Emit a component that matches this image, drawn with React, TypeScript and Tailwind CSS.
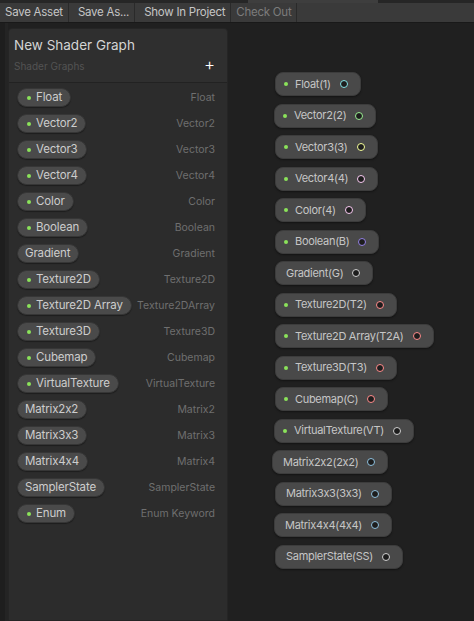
import React from "react"

const font = { fontFamily: "Inter, 'Noto Sans', sans-serif" }

type Prop = { name: string; type: string; dot: boolean }

const props: Prop[] = [
  { name: "Float", type: "Float", dot: true },
  { name: "Vector2", type: "Vector2", dot: true },
  { name: "Vector3", type: "Vector3", dot: true },
  { name: "Vector4", type: "Vector4", dot: true },
  { name: "Color", type: "Color", dot: true },
  { name: "Boolean", type: "Boolean", dot: true },
  { name: "Gradient", type: "Gradient", dot: false },
  { name: "Texture2D", type: "Texture2D", dot: true },
  { name: "Texture2D Array", type: "Texture2DArray", dot: true },
  { name: "Texture3D", type: "Texture3D", dot: true },
  { name: "Cubemap", type: "Cubemap", dot: true },
  { name: "VirtualTexture", type: "VirtualTexture", dot: true },
  { name: "Matrix2x2", type: "Matrix2", dot: false },
  { name: "Matrix3x3", type: "Matrix3", dot: false },
  { name: "Matrix4x4", type: "Matrix4", dot: false },
  { name: "SamplerState", type: "SamplerState", dot: false },
  { name: "Enum", type: "Enum Keyword", dot: true },
]

type Node = { label: string; port: string; dot: boolean; shift?: string }

const nodes: Node[] = [
  { label: "Float(1)", port: "#84e4e7", dot: true },
  { label: "Vector2(2)", port: "#9aef92", dot: true, shift: "-ml-px" },
  { label: "Vector3(3)", port: "#f6ff9a", dot: true },
  { label: "Vector4(4)", port: "#fbcbf4", dot: true },
  { label: "Color(4)", port: "#fbcbf4", dot: true },
  { label: "Boolean(B)", port: "#9481e6", dot: true },
  { label: "Gradient(G)", port: "#d0d0d0", dot: false },
  { label: "Texture2D(T2)", port: "#ff8b8b", dot: true },
  { label: "Texture2D Array(T2A)", port: "#ff8b8b", dot: true },
  { label: "Texture3D(T3)", port: "#ff8b8b", dot: true },
  { label: "Cubemap(C)", port: "#ff8b8b", dot: true },
  { label: "VirtualTexture(VT)", port: "#d0d0d0", dot: true, shift: "-ml-px" },
  { label: "Matrix2x2(2x2)", port: "#8fc1df", dot: false, shift: "-ml-[3px]" },
  { label: "Matrix3x3(3x3)", port: "#8fc1df", dot: false },
  { label: "Matrix4x4(4x4)", port: "#8fc1df", dot: false, shift: "-ml-px" },
  { label: "SamplerState(SS)", port: "#d0d0d0", dot: false },
]

function ToolButton({ label, disabled }: { label: string; disabled?: boolean }) {
  return (
    <div
      className={`h-full flex items-center px-[5px] border-r border-[#2a2a2a] text-[11.5px] tracking-[-0.25px] whitespace-nowrap ${
        disabled ? "text-[#7c7c7c]" : "text-[#c6c6c6]"
      }`}
    >
      {label}
    </div>
  )
}

export default function App() {
  return (
    <div
      className="w-[474px] h-[621px] overflow-hidden bg-[#202020] flex flex-col [font-feature-settings:'calt'_0]"
      style={font}
    >
      {/* Toolbar */}
      <div className="h-[3px] bg-[#262626] flex">
        <div className="ml-[248px] w-[130px] bg-[#3e3e3e]" />
      </div>
      <div className="h-[19px] bg-[#3a3a3a] border-b border-[#191919] flex items-stretch box-content">
        <ToolButton label="Save Asset" />
        <div className="w-[4px]" />
        <ToolButton label="Save As..." />
        <div className="w-[4px]" />
        <ToolButton label="Show In Project" />
        <ToolButton label="Check Out" disabled />
      </div>

      <div className="flex-1 flex min-h-0">
        {/* left strip */}
        <div className="w-[8px] flex">
          <div className="w-[5px] bg-[#1e1e1e]" />
          <div className="w-[3px] bg-[#242424]" />
        </div>

        {/* Blackboard */}
        <div className="mt-[5px] w-[220px] bg-[#2c2c2c] rounded-t-[4px] border border-[#252525] flex flex-col">
          <div className="h-[54px] bg-[#2f2f2f] rounded-t-[4px] border-b border-[#222222] px-[5px] pt-[7px] relative">
            <div className="text-[13.5px] text-[#d4d4d4] leading-[18px]">New Shader Graph</div>
            <div className="mt-[6px] text-[10px] text-[#535353] leading-[12px]">Shader Graphs</div>
            <div className="absolute right-[12px] top-[26px] text-white text-[17px] leading-[18px] font-light">+</div>
          </div>
          <div className="pt-[5px] pl-[8px] pr-[12px] flex flex-col gap-[7px]">
            {props.map((p) => (
              <div key={p.name} className="flex items-center justify-between h-[19px]">
                <div className="h-[19px] rounded-full bg-[#4a4a4a] border border-[#363636] flex items-center pr-[8px] pl-[7px] shadow-[0_1px_1px_rgba(0,0,0,0.35)]">
                  {p.dot && <div className="w-[4px] h-[4px] rounded-full bg-[#8be35a] mr-[5px] ml-[2px]" />}
                  <span className="text-[11.5px] tracking-[-0.15px] text-[#cdcdcd] leading-none whitespace-nowrap">
                    {p.name}
                  </span>
                </div>
                <span className="text-[10.5px] text-[#6f6f6f] whitespace-nowrap">{p.type}</span>
              </div>
            ))}
          </div>
        </div>

        {/* Graph canvas */}
        <div className="flex-1 pl-[47px] pt-[49px] flex flex-col items-start gap-[7.5px]">
          {nodes.map((n) => (
            <div
              key={n.label}
              className={`h-[24px] rounded-[8px] bg-[#494949] border border-[#3c3c3c] flex items-center pr-[12px] shadow-[0_1px_2px_rgba(0,0,0,0.4)] ${
                n.dot ? "pl-[8px]" : "pl-[10px]"
              } ${n.shift ?? ""}`}
            >
              {n.dot && <div className="w-[4px] h-[4px] rounded-full bg-[#8be35a] mr-[7px]" />}
              <span className="text-[11px] tracking-[-0.3px] text-[#c6c6c6] leading-none whitespace-nowrap">
                {n.label}
              </span>
              <div
                className="ml-[9px] w-[8px] h-[8px] rounded-full bg-[#1d1d1d] border-[1.5px]"
                style={{ borderColor: n.port }}
              />
            </div>
          ))}
        </div>
      </div>
    </div>
  )
}
